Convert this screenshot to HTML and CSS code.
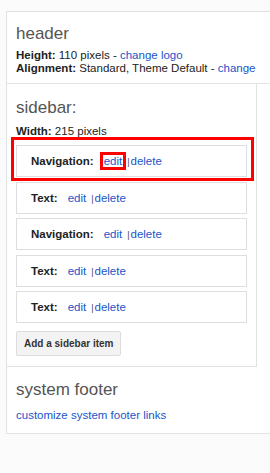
FILE: index.html
```html
<!DOCTYPE html>
<html lang="en">
<head>
    <meta charset="UTF-8">
    <meta name="viewport" content="width=device-width, initial-scale=1.0">
    <title>Layout</title>
    <link rel="stylesheet" href="styles.css">
</head>
<body>
    <div class="frame">
        <div class="section header">
            <h2>header</h2>
            <div class="line"><b>Height:</b> 110 pixels - <a href="#">change logo</a></div>
            <div class="line"><b>Alignment:</b> Standard, Theme Default - <a href="#">change</a></div>
        </div>

        <div class="section sidebar">
            <h2>sidebar:</h2>
            <div class="line"><b>Width:</b> 215 pixels</div>

            <div class="items">
                <div class="item marked">
                    <b class="label">Navigation:</b>
                    <a href="#" class="edit picked">edit</a><span class="sep">|</span><a href="#">delete</a>
                </div>
                <div class="item">
                    <b class="label">Text:</b>
                    <a href="#" class="edit">edit</a><span class="sep">|</span><a href="#">delete</a>
                </div>
                <div class="item">
                    <b class="label">Navigation:</b>
                    <a href="#" class="edit">edit</a><span class="sep">|</span><a href="#">delete</a>
                </div>
                <div class="item">
                    <b class="label">Text:</b>
                    <a href="#" class="edit">edit</a><span class="sep">|</span><a href="#">delete</a>
                </div>
                <div class="item">
                    <b class="label">Text:</b>
                    <a href="#" class="edit">edit</a><span class="sep">|</span><a href="#">delete</a>
                </div>
            </div>

            <button type="button">Add a sidebar item</button>
        </div>

        <div class="section footer">
            <h2>system footer</h2>
            <div class="line"><a href="#">customize system footer links</a></div>
        </div>
    </div>
</body>
</html>
```

FILE: styles.css
```css
html, body {
    overflow: hidden;
}

body {
    margin: 0;
    background-color: #fbfbfb;
    font-family: "Liberation Sans", Arial, sans-serif;
    font-size: 11.5px;
    color: #222;
}

a {
    color: #1a55c8;
    text-decoration: none;
}

.frame {
    margin: 11px 0 0 6px;
    width: 320px;
    background-color: #fff;
    border: 1px solid #e2e2e2;
    border-right: none;
}

h2 {
    margin: 0;
    font-size: 17px;
    font-weight: normal;
    line-height: 20px;
    color: #555;
}

.line {
    line-height: 13px;
}

.section {
    padding: 0 9px;
}

.header {
    padding-top: 12px;
    padding-bottom: 8px;
    border-bottom: 1px solid #e2e2e2;
}

.header h2 {
    margin-bottom: 5px;
}

/* Sidebar */
.sidebar {
    width: 231px;
    padding-top: 14px;
    padding-bottom: 10px;
    border-right: 1px solid #e2e2e2;
    border-bottom: 1px solid #e2e2e2;
}

.sidebar h2 {
    margin-bottom: 7px;
}

.items {
    display: flex;
    flex-direction: column;
    gap: 4.5px;
    margin-top: 7px;
}

.item {
    height: 30px;
    display: flex;
    align-items: center;
    padding-left: 14px;
    border: 1px solid #dedede;
}

.label {
    margin-right: 10px;
}

.sep {
    font-size: 9px;
    color: #445;
    margin: 2px 1px 0 5px;
}

/* Red annotation boxes */
.marked {
    position: relative;
}

.marked::after {
    content: "";
    position: absolute;
    top: -9px;
    left: -6px;
    right: -8px;
    bottom: -5px;
    border: 3px solid #f00;
}

.picked {
    padding: 0 1px;
    margin: 0 -1px;
    outline: 3px solid #f00;
}

button {
    margin-top: 8px;
    height: 25px;
    padding: 0 7px;
    font-family: "Liberation Sans", Arial, sans-serif;
    font-size: 10px;
    font-weight: bold;
    color: #333;
    background-color: #f3f3f3;
    border: 1px solid #dcdcdc;
    border-radius: 2px;
}

/* Footer */
.footer {
    padding-top: 13px;
    padding-bottom: 11px;
}

.footer h2 {
    margin-bottom: 9px;
}
```
